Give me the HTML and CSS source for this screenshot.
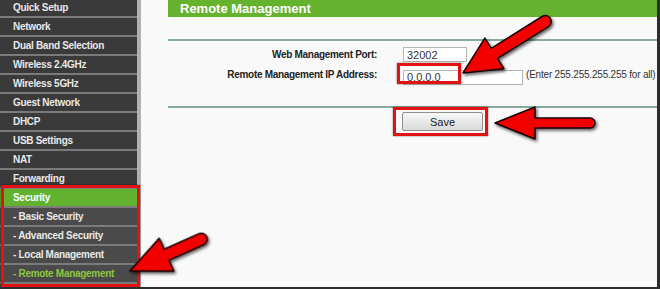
FILE: index.html
```html
<!DOCTYPE html>
<html lang="en">
<head>
  <meta charset="UTF-8">
  <title>Remote Management</title>
  <link rel="stylesheet" href="styles.css">
</head>
<body>

  <div class="page">
    <nav class="menu">
      <a class="item">Quick Setup</a>
      <a class="item">Network</a>
      <a class="item">Dual Band Selection</a>
      <a class="item">Wireless 2.4GHz</a>
      <a class="item">Wireless 5GHz</a>
      <a class="item">Guest Network</a>
      <a class="item">DHCP</a>
      <a class="item">USB Settings</a>
      <a class="item">NAT</a>
      <a class="item">Forwarding</a>
      <div class="group">
        <a class="item active">Security</a>
        <a class="item sub">- Basic Security</a>
        <a class="item sub">- Advanced Security</a>
        <a class="item sub">- Local Management</a>
        <a class="item sub current">- Remote Management</a>
      </div>
    </nav>

    <main class="content">
      <div class="title">Remote Management</div>
      <div class="rule first"></div>

      <div class="form">
        <label>Web Management Port:</label>
        <div class="field"><input class="short" type="text" value="32002"></div>
        <label>Remote Management IP Address:</label>
        <div class="field">
          <span class="mark"><input class="long" type="text" value="0.0.0.0"></span>
          <span class="hint">(Enter 255.255.255.255 for all)</span>
        </div>
      </div>

      <div class="rule second"></div>

      <div class="actions">
        <span class="save-box"><button class="save">Save</button></span>
      </div>
    </main>

    <!-- arrows drawn over the screenshot -->
    <svg class="arrows" width="660" height="289" viewBox="0 0 660 289">
      <defs>
        <filter id="shadow" x="-20%" y="-20%" width="140%" height="140%">
          <feDropShadow dx="1.5" dy="2" stdDeviation="1.5" flood-color="#000" flood-opacity="0.6"/>
        </filter>
      </defs>
      <g class="arrow" filter="url(#shadow)">
        <path transform="translate(463,73) rotate(-32)" d="M0,0 L37,-18 L37,-6 L97,-6 A6,6 0 0 1 97,6 L37,6 L37,18 Z"/>
        <path transform="translate(495,123)" d="M0,0 L40,-16 L40,-5 L95,-5 A5,5 0 0 1 95,5 L40,5 L40,16 Z"/>
        <path transform="translate(130,271) rotate(-24)" d="M0,0 L40,-18 L40,-6 L78,-6 A6,6 0 0 1 78,6 L40,6 L40,18 Z"/>
      </g>
    </svg>
  </div>

</body>
</html>
```

FILE: styles.css
```css
body {
  margin: 0;
  font-family: "Liberation Sans", Arial, sans-serif;
  background-color: #2d2d2d;
}

.page {
  position: relative;
  display: flex;
  width: 660px;
  height: 289px;
  box-sizing: border-box;
  border-right: 3px solid #2d2d2d;
  border-bottom: 2px solid #2d2d2d;
  overflow: hidden;
}

/* menu on the left */
.menu {
  flex: none;
  width: 137px;
  background-color: #3a3a3a;
  border-right: 4px solid #b1b1b1;
}

.item {
  display: block;
  height: 17px;
  line-height: 17px;
  padding-left: 13px;
  border-bottom: 2px solid #7b7b7b;
  color: #e8e8e8;
  font-size: 10px;
  font-weight: bold;
  letter-spacing: -0.3px;
  white-space: nowrap;
}

.menu > .item:first-child {
  margin-top: -1px;
}

.item.active {
  background-color: #62b22f;
  color: #fff;
}

.item.sub {
  background-color: #4a4a4a;
}

.item.current {
  color: #8ec63f;
}

.group {
  position: relative;
}

.group::after {
  content: "";
  position: absolute;
  left: 1px;
  right: -3px;
  top: -4px;
  bottom: -3px;
  border: 3px solid #e31212;
  box-shadow: 0 0 2px rgba(0, 0, 0, 0.5);
}

/* main area */
.content {
  flex: 1;
  background-color: #f9f9f9;
  padding-left: 27px;
}

.title {
  height: 17px;
  line-height: 17px;
  padding-left: 12px;
  background-color: #65b22e;
  color: #fff;
  font-size: 13px;
  font-weight: bold;
}

.rule {
  height: 2px;
  background-color: #86ab9c;
}

.rule.first {
  margin-top: 22px;
}

.rule.second {
  margin-top: 24px;
}

.form {
  display: grid;
  grid-template-columns: 209px auto;
  column-gap: 26px;
  row-gap: 5px;
  align-items: center;
  padding-top: 6px;
}

.form label {
  text-align: right;
  color: #222;
  font-size: 10px;
  font-weight: bold;
  letter-spacing: -0.3px;
  white-space: nowrap;
}

.field {
  display: flex;
  align-items: center;
  height: 15px;
}

.field input {
  height: 15px;
  box-sizing: border-box;
  margin: 0;
  padding: 0 3px;
  border: 1px solid #b5b5b5;
  background-color: #fff;
  color: #333;
  font-family: "Liberation Sans", Arial, sans-serif;
  font-size: 11px;
}

.short {
  width: 64px;
}

.long {
  width: 120px;
}

.mark {
  position: relative;
  display: block;
  height: 15px;
}

.mark::after {
  content: "";
  position: absolute;
  left: -6px;
  top: -4px;
  width: 64px;
  height: 21px;
  box-sizing: border-box;
  border: 3px solid #e31212;
  box-shadow: 0 0 2px rgba(0, 0, 0, 0.5);
}

.hint {
  margin-left: 3px;
  color: #333;
  font-size: 10px;
  letter-spacing: -0.2px;
  white-space: nowrap;
}

.actions {
  margin-top: -1px;
  padding-left: 225px;
}

.save-box {
  display: inline-block;
  padding: 2px 2px 2px 6px;
  border: 3px solid #e31212;
  box-shadow: 0 0 2px rgba(0, 0, 0, 0.5);
  line-height: 0;
}

.save {
  width: 81px;
  height: 19px;
  margin: 0;
  padding: 0;
  border: 1px solid #8f8f8f;
  border-radius: 2px;
  background: linear-gradient(#f8f8f8, #d9d9d9);
  color: #222;
  font-family: "Liberation Sans", Arial, sans-serif;
  font-size: 11px;
}

/* arrows */
.arrows {
  position: absolute;
  left: 0;
  top: 0;
  pointer-events: none;
}

.arrow path {
  fill: #f20606;
  stroke: #1a0000;
  stroke-width: 1.5;
  stroke-linejoin: round;
}
```
